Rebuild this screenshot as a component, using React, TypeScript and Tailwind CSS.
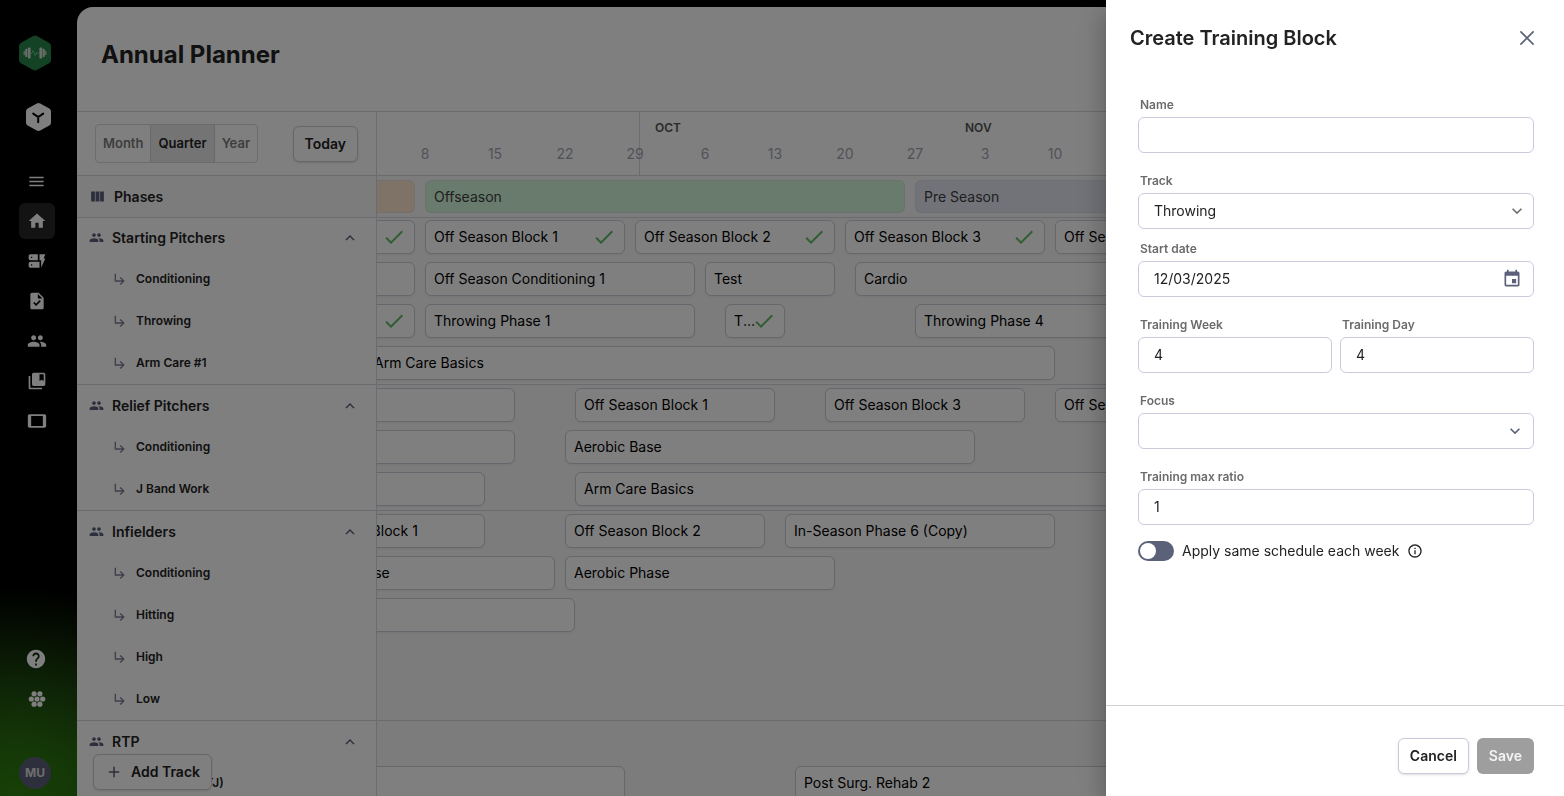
import React, { useState } from 'react';
import clsx from 'clsx';
import {
  MdAdd,
  MdCheck,
  MdCollectionsBookmark,
  MdDynamicForm,
  MdEvent,
  MdExpandLess,
  MdExpandMore,
  MdGroup,
  MdHelp,
  MdHome,
  MdInfoOutline,
  MdMenu,
  MdSubdirectoryArrowRight,
  MdTablet,
  MdTask,
  MdViewColumn,
} from 'react-icons/md';

// Days are counted from Monday 25 August, one grid column per day
interface Block {
  start: number;
  days: number;
  label?: string;
  done?: boolean;
}

interface Track {
  name: string;
  blocks: Block[];
}

interface Group {
  name: string;
  blocks: Block[];
  tracks: Track[];
}

const months = [
  { label: 'OCT', day: 37 },
  { label: 'NOV', day: 68 },
  { label: 'DEC', day: 98 },
];

const weeks = [
  { label: '8', day: 14 },
  { label: '15', day: 21 },
  { label: '22', day: 28 },
  { label: '29', day: 35 },
  { label: '6', day: 42 },
  { label: '13', day: 49 },
  { label: '20', day: 56 },
  { label: '27', day: 63 },
  { label: '3', day: 70 },
  { label: '10', day: 77 },
  { label: '17', day: 84 },
  { label: '24', day: 91 },
];

const phases = [
  { start: 0, days: 13, label: '', color: 'bg-[#ffe4cf]' },
  { start: 14, days: 48, label: 'Offseason', color: 'bg-[#d0f6d9]' },
  { start: 63, days: 50, label: 'Pre Season', color: 'bg-[#e4e6f3]' },
];

const groups: Group[] = [
  {
    name: 'Starting Pitchers',
    blocks: [
      { start: 0, days: 13, done: true },
      { start: 14, days: 20, label: 'Off Season Block 1', done: true },
      { start: 35, days: 20, label: 'Off Season Block 2', done: true },
      { start: 56, days: 20, label: 'Off Season Block 3', done: true },
      { start: 77, days: 20, label: 'Off Season Block 4' },
    ],
    tracks: [
      {
        name: 'Conditioning',
        blocks: [
          { start: 0, days: 13 },
          { start: 14, days: 27, label: 'Off Season Conditioning 1' },
          { start: 42, days: 13, label: 'Test' },
          { start: 57, days: 48, label: 'Cardio' },
        ],
      },
      {
        name: 'Throwing',
        blocks: [
          { start: 0, days: 13, done: true },
          { start: 14, days: 27, label: 'Throwing Phase 1' },
          { start: 44, days: 6, label: 'Throwing Phase 2', done: true },
          { start: 63, days: 27, label: 'Throwing Phase 4' },
        ],
      },
      {
        name: 'Arm Care #1',
        blocks: [{ start: 8, days: 69, label: 'Arm Care Basics' }],
      },
    ],
  },
  {
    name: 'Relief Pitchers',
    blocks: [
      { start: 0, days: 23 },
      { start: 29, days: 20, label: 'Off Season Block 1' },
      { start: 54, days: 20, label: 'Off Season Block 3' },
      { start: 77, days: 20, label: 'Off Season Block 4' },
    ],
    tracks: [
      {
        name: 'Conditioning',
        blocks: [
          { start: 0, days: 23 },
          { start: 28, days: 41, label: 'Aerobic Base' },
        ],
      },
      {
        name: 'J Band Work',
        blocks: [
          { start: 0, days: 20 },
          { start: 29, days: 69, label: 'Arm Care Basics' },
        ],
      },
    ],
  },
  {
    name: 'Infielders',
    blocks: [
      { start: 0, days: 20, label: 'Off Season Block 1' },
      { start: 28, days: 20, label: 'Off Season Block 2' },
      { start: 50, days: 27, label: 'In-Season Phase 6 (Copy)' },
    ],
    tracks: [
      {
        name: 'Conditioning',
        blocks: [
          { start: 0, days: 27, label: 'Aerobic Phase' },
          { start: 28, days: 27, label: 'Aerobic Phase' },
        ],
      },
      { name: 'Hitting', blocks: [{ start: 0, days: 29 }] },
      { name: 'High', blocks: [] },
      { name: 'Low', blocks: [] },
    ],
  },
  {
    name: 'RTP',
    blocks: [],
    tracks: [
      {
        name: 'Post-Surg. (TJ)',
        blocks: [
          { start: 0, days: 34 },
          { start: 51, days: 48, label: 'Post Surg. Rehab 2' },
        ],
      },
    ],
  },
];

const navItems = [
  { label: 'Home', icon: MdHome, active: true },
  { label: 'Programs', icon: MdDynamicForm },
  { label: 'Tasks', icon: MdTask },
  { label: 'Athletes', icon: MdGroup },
  { label: 'Library', icon: MdCollectionsBookmark },
  { label: 'Devices', icon: MdTablet },
];

const ranges = ['Month', 'Quarter', 'Year'];

export default function App() {
  return (
    <div className="relative flex h-screen overflow-hidden bg-black font-['Inter',sans-serif] text-[#222]">
      <Sidebar />
      <Planner />
      <div className="fixed inset-0 bg-black/50" aria-hidden="true" />
      <CreateBlockDrawer />
    </div>
  );
}

function Sidebar() {
  return (
    <aside className="flex w-[77px] shrink-0 flex-col bg-[radial-gradient(ellipse_260px_210px_at_20%_100%,#30810f_0%,#286c0f_28%,#1b450d_55%,#0b1c05_80%,#000_100%)] pt-[35px] pb-[7px]">
      <a href="#" aria-label="Team" className="ml-[19px] self-start">
        <TeamLogo />
      </a>
      <a href="#" aria-label="Organisation" className="mt-8 ml-[26px] self-start">
        <OrgLogo />
      </a>
      <nav className="mt-10 ml-[19px] flex w-9 flex-col text-white">
        <button aria-label="Menu" className="flex h-5 w-[34px] items-center justify-center">
          <MdMenu className="size-[19px]" />
        </button>
        <div className="mt-3 flex flex-col gap-1">
          {navItems.map(({ label, icon: Icon, active }) => (
            <a
              key={label}
              href="#"
              aria-label={label}
              className={clsx(
                'flex size-9 items-center justify-center rounded-md',
                active && 'bg-[#262626]'
              )}
            >
              <Icon className="size-5" />
            </a>
          ))}
        </div>
      </nav>
      <div className="mt-auto ml-[19px] flex flex-col items-start text-white">
        <button aria-label="Help" className="flex h-10 w-[34px] items-center justify-center">
          <MdHelp className="size-[22px]" />
        </button>
        <button aria-label="Apps" className="flex h-10 w-9 items-center justify-center">
          <HoneycombIcon />
        </button>
        <button className="mt-[38px] size-8 rounded-full bg-[#5b6179] text-xs font-bold text-[#ddd]">
          MU
        </button>
      </div>
    </aside>
  );
}

function HoneycombIcon() {
  return (
    <svg width="20" height="20" viewBox="0 0 20 20" fill="currentColor">
      <circle cx="10" cy="10" r="2.6" />
      <circle cx="4.3" cy="10" r="2.6" />
      <circle cx="15.7" cy="10" r="2.6" />
      <circle cx="7.1" cy="4.8" r="2.6" />
      <circle cx="12.9" cy="4.8" r="2.6" />
      <circle cx="7.1" cy="15.2" r="2.6" />
      <circle cx="12.9" cy="15.2" r="2.6" />
    </svg>
  );
}

function TeamLogo() {
  return (
    <svg width="32" height="36" viewBox="0 0 32 36">
      <path
        d="M14.2 .9a4 4 0 0 1 3.6 0l12.2 6.8a4 4 0 0 1 2 3.4v13.8a4 4 0 0 1-2 3.4l-12.2 6.8a4 4 0 0 1-3.6 0L2 28.3a4 4 0 0 1-2-3.4V11.1a4 4 0 0 1 2-3.4z"
        fill="#27844a"
      />
      <g fill="#d3ddd7">
        <rect x="8.8" y="12.4" width="2.8" height="11" rx="1" />
        <rect x="6.2" y="13.8" width="2.1" height="8.2" rx=".8" />
        <rect x="4.6" y="16" width="1.2" height="4" rx=".5" />
        <rect x="20.4" y="12.4" width="2.8" height="11" rx="1" />
        <rect x="23.7" y="13.8" width="2.1" height="8.2" rx=".8" />
        <rect x="26.2" y="16" width="1.2" height="4" rx=".5" />
      </g>
      <path
        d="M11.8 18.4h1l1.4-3 2 5.2 1.6-3.6.8 1.4h1.6"
        fill="none"
        stroke="#5fc489"
        strokeWidth="1"
        strokeLinejoin="round"
      />
    </svg>
  );
}

function OrgLogo() {
  return (
    <svg width="25" height="28" viewBox="0 0 25 28">
      <path
        d="M10.8 .5a3.4 3.4 0 0 1 3.4 0l9.1 5a3.4 3.4 0 0 1 1.7 3v11a3.4 3.4 0 0 1-1.7 3l-9.1 5a3.4 3.4 0 0 1-3.4 0l-9.1-5a3.4 3.4 0 0 1-1.7-3v-11a3.4 3.4 0 0 1 1.7-3z"
        fill="#fff"
      />
      <path
        d="M7.2 10.6l5 3.4 5-3.4M12.2 13.8v5.4"
        fill="none"
        stroke="#000"
        strokeWidth="2"
        strokeLinecap="round"
      />
    </svg>
  );
}

function Planner() {
  return (
    <main className="mt-[7px] flex min-w-0 flex-1 flex-col rounded-tl-2xl bg-white">
      <header className="flex h-[105px] shrink-0 items-start border-b border-[#d6d7de] px-6 pt-8">
        <h1 className="text-2xl leading-8 font-bold">Annual Planner</h1>
      </header>
      <div className="flex min-h-0 flex-1 overflow-hidden">
        <TrackList />
        <Timeline />
      </div>
    </main>
  );
}

function TrackList() {
  const [range, setRange] = useState('Quarter');

  return (
    <section className="relative w-[300px] shrink-0 border-r border-[#d6d8e1]">
      <div className="flex h-16 items-center justify-between border-b border-[#d6d7de] px-[18px]">
        <div className="flex h-[39px] divide-x divide-[#d2d2d2] overflow-hidden rounded border border-[#d8d8d8] text-[13px] font-semibold">
          {ranges.map((name) => (
            <button
              key={name}
              onClick={() => setRange(name)}
              className={clsx('px-[7px]', range === name ? 'bg-[#e9e9e9] text-[#222]' : 'text-[#7c7c7c]')}
            >
              {name}
            </button>
          ))}
        </div>
        <button className="h-9 rounded-md border border-[#cdced8] bg-white px-[11px] text-sm font-semibold shadow-sm">
          Today
        </button>
      </div>

      <div className="flex h-[42px] items-center gap-2 border-b border-[#d6d7de] bg-[#f8f8f8] px-3 text-sm font-semibold">
        <MdViewColumn className="size-[17px] text-[#5b6179]" />
        Phases
      </div>

      <div className="-mt-px">
        {groups.map((group) => (
          <div key={group.name} className="border-b border-[#d6d7de]">
            <div className="flex h-[41px] items-center gap-2 pr-[17px] pl-3 text-sm font-semibold">
              <MdGroup className="size-[15px] text-[#5b6179]" />
              {group.name}
              <button aria-label={`Collapse ${group.name}`} className="ml-auto text-[#5b6179]">
                <MdExpandLess className="size-[18px]" />
              </button>
            </div>
            {group.tracks.map((track) => (
              <div
                key={track.name}
                className="flex h-[42px] items-center gap-2 pl-[35px] text-xs font-semibold"
              >
                <MdSubdirectoryArrowRight className="size-4 text-[#7c7f96]" />
                {track.name}
              </div>
            ))}
          </div>
        ))}
      </div>

      {/* Floats over the list */}
      <button className="absolute bottom-1.5 left-4 flex h-9 items-center gap-2 rounded-md border border-[#cdced8] bg-white px-[11px] text-sm font-semibold shadow-sm">
        <MdAdd className="size-[18px] text-[#5b6179]" />
        Add Track
      </button>
    </section>
  );
}

function Timeline() {
  return (
    <section className="min-w-0 flex-1 overflow-hidden bg-[#f8f8f8]">
      <div className="-ml-[92px]">
        <div className="grid h-16 grid-cols-[repeat(140,10px)] grid-rows-[32px_20px] border-b border-[#d6d7de] bg-white">
          <div
            className="row-span-full ml-1 h-[63px] w-px bg-[#d6d8e1]"
            style={{ gridColumnStart: 36 }}
          />
          {months.map((month) => (
            <div
              key={month.label}
              className="row-start-1 flex w-0 items-center text-xs font-semibold text-[#555]"
              style={{ gridColumnStart: month.day + 1 }}
            >
              {month.label}
            </div>
          ))}
          {weeks.map((week) => (
            <div
              key={week.day}
              className="row-start-2 flex w-0 items-center justify-center text-sm text-[#a3a5b2]"
              style={{ gridColumnStart: week.day + 1 }}
            >
              {week.label}
            </div>
          ))}
        </div>

        <div className="grid h-[42px] grid-cols-[repeat(140,10px)] border-b border-[#d6d7de] pt-1 pb-1">
          {phases.map((phase) => (
            <div
              key={phase.start}
              className={clsx(
                'row-start-1 flex items-center rounded-md border border-[#d9dbe6]/60 px-2 text-sm text-[#3f3f3f]',
                phase.color
              )}
              style={{ gridColumn: `${phase.start + 1} / span ${phase.days}` }}
            >
              {phase.label}
            </div>
          ))}
        </div>

        <div className="-mt-px">
          {groups.map((group) => (
            <div key={group.name} className="border-b border-[#d6d7de]">
              <BlockRow blocks={group.blocks} first />
              {group.tracks.map((track) => (
                <BlockRow key={track.name} blocks={track.blocks} />
              ))}
            </div>
          ))}
        </div>
      </div>
    </section>
  );
}

function BlockRow({ blocks, first }: { blocks: Block[]; first?: boolean }) {
  return (
    <div
      className={clsx(
        'grid grid-cols-[repeat(140,10px)]',
        first ? 'h-[41px] pt-[3px] pb-1' : 'h-[42px] py-1'
      )}
    >
      {blocks.map((block) => (
        <div
          key={block.start}
          className="row-start-1 flex items-center rounded-md border border-[#cdced8] bg-white px-2 text-sm text-black shadow-xs"
          style={{ gridColumn: `${block.start + 1} / span ${block.days}` }}
        >
          <span className="min-w-0 flex-1 truncate">{block.label}</span>
          {block.done && <MdCheck className="-ml-1 size-6 shrink-0 text-[#62bb65]" />}
        </div>
      ))}
    </div>
  );
}

const fieldClass =
  'h-9 w-full appearance-none rounded-md border border-[#c9cbda] bg-white px-[15px] text-sm text-[#222] outline-none focus:border-[#5b6179]';

function TextInput({ className, ...props }: React.ComponentProps<'input'>) {
  return <input className={clsx(fieldClass, 'pb-0.5', className)} {...props} />;
}

function Field({
  id,
  label,
  children,
}: {
  id: string;
  label: string;
  children: React.ReactNode;
}) {
  return (
    <div className="min-w-0 flex-1">
      <label htmlFor={id} className="mb-1 block pl-0.5 text-xs font-semibold text-[#6b6b6b]">
        {label}
      </label>
      {children}
    </div>
  );
}

function CreateBlockDrawer() {
  const [name, setName] = useState('');
  const [track, setTrack] = useState('Throwing');
  const [date, setDate] = useState('12/03/2025');
  const [week, setWeek] = useState('4');
  const [day, setDay] = useState('4');
  const [focus, setFocus] = useState('');
  const [ratio, setRatio] = useState('1');
  const [sameSchedule, setSameSchedule] = useState(false);

  return (
    <div
      role="dialog"
      aria-labelledby="drawer-title"
      className="fixed inset-y-0 right-0 flex w-[458px] flex-col bg-white shadow-[0_8px_10px_-5px_rgba(0,0,0,0.2),0_16px_24px_2px_rgba(0,0,0,0.14),0_6px_30px_5px_rgba(0,0,0,0.12)]"
    >
      <div className="flex items-center justify-between pt-6 pr-[25px] pl-6">
        <h2 id="drawer-title" className="text-xl leading-7 font-semibold">
          Create Training Block
        </h2>
        <button aria-label="Close" className="text-[#5b6179]">
          <svg width="24" height="24" viewBox="0 0 24 24" fill="none" stroke="currentColor" strokeWidth="1.6">
            <path d="M5.4 5.4l13.2 13.2M18.6 5.4L5.4 18.6" />
          </svg>
        </button>
      </div>

      <form className="flex flex-1 flex-col pt-[45px] pr-[30px] pl-8">
        <div className="flex flex-col gap-5">
          <Field id="name" label="Name">
            <TextInput id="name" value={name} onChange={(e) => setName(e.target.value)} />
          </Field>

          <div className="flex flex-col gap-3">
            <Field id="track" label="Track">
              <div className="relative">
                <select id="track" className={fieldClass} value={track} onChange={(e) => setTrack(e.target.value)}>
                  <option>Throwing</option>
                </select>
                <MdExpandMore className="pointer-events-none absolute top-2 right-[7px] size-5 text-[#6f6f6f]" />
              </div>
            </Field>
            <Field id="date" label="Start date">
              <div className="relative">
                <TextInput id="date" value={date} onChange={(e) => setDate(e.target.value)} />
                <button
                  type="button"
                  aria-label="Choose date"
                  className="absolute top-2 right-3 text-[#5b6179]"
                >
                  <MdEvent className="size-5" />
                </button>
              </div>
            </Field>
          </div>

          <div className="flex gap-2">
            <Field id="week" label="Training Week">
              <TextInput id="week" value={week} onChange={(e) => setWeek(e.target.value)} />
            </Field>
            <Field id="day" label="Training Day">
              <TextInput id="day" value={day} onChange={(e) => setDay(e.target.value)} />
            </Field>
          </div>

          <Field id="focus" label="Focus">
            <div className="relative">
              <select id="focus" className={fieldClass} value={focus} onChange={(e) => setFocus(e.target.value)}>
                <option value=""></option>
              </select>
              <MdExpandMore className="pointer-events-none absolute top-2 right-[9px] size-5 text-[#5b6179]" />
            </div>
          </Field>

          <Field id="ratio" label="Training max ratio">
            <TextInput id="ratio" value={ratio} onChange={(e) => setRatio(e.target.value)} />
          </Field>
        </div>

        <div className="mt-4 flex items-center gap-2">
          <input
            id="same-schedule"
            type="checkbox"
            role="switch"
            checked={sameSchedule}
            onChange={(e) => setSameSchedule(e.target.checked)}
            className="flex h-5 w-9 appearance-none items-center rounded-full bg-[#5b6179] px-0.5 before:size-4 before:rounded-full before:bg-white checked:justify-end checked:bg-[#27844a]"
          />
          <label htmlFor="same-schedule" className="text-sm">
            Apply same schedule each week
          </label>
          <MdInfoOutline className="size-4" />
        </div>
      </form>

      <div className="flex h-[91px] shrink-0 items-start justify-end gap-2 border-t border-[#cfd0d6] pt-8 pr-[30px] text-sm font-semibold">
        <button className="h-9 rounded-md border border-[#c9cbda] bg-white px-[11px] shadow-sm">Cancel</button>
        <button disabled className="h-9 rounded-md bg-[#9e9e9e] px-3 text-[#f3f3f3]">
          Save
        </button>
      </div>
    </div>
  );
}
